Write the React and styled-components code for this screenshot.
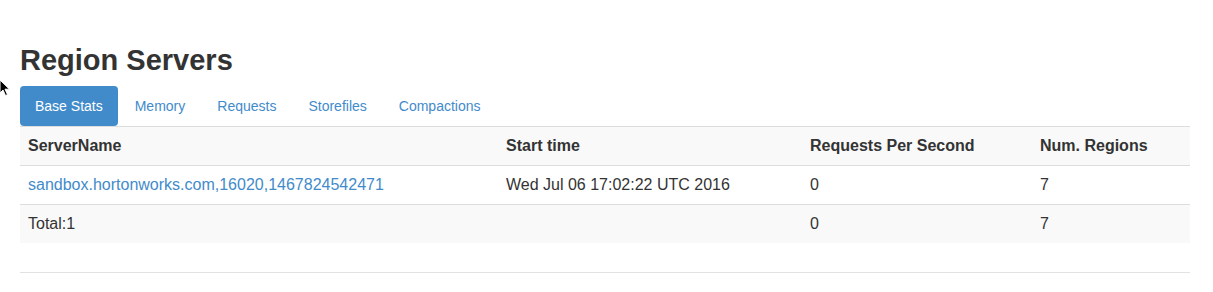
import React from "react";
import styled, { createGlobalStyle } from "styled-components";

const GlobalStyle = createGlobalStyle`
  body {
    margin: 0;
    background: #fff;
    font-family: "Liberation Sans", Arial, sans-serif;
    font-size: 14px;
    color: #333;
  }
`;

const tabs = ["Base Stats", "Memory", "Requests", "Storefiles", "Compactions"];

const columns = [
  { label: "ServerName", width: "478px" },
  { label: "Start time", width: "304px" },
  { label: "Requests Per Second", width: "230px" },
  { label: "Num. Regions", width: "auto" },
];

const rows = [
  {
    name: "sandbox.hortonworks.com,16020,1467824542471",
    link: true,
    start: "Wed Jul 06 17:02:22 UTC 2016",
    rps: "0",
    regions: "7",
  },
  { name: "Total:1", link: false, start: "", rps: "0", regions: "7" },
];

const App = () => {
  return (
    <>
      <GlobalStyle />
      <StyledPage>
        <StyledCursor viewBox="0 0 12 18">
          <path
            d="M1 1 L1 14 L4 11 L6.5 16.5 L8.5 15.6 L6 10.2 L10.5 10.2 Z"
            fill="#000"
            stroke="#fff"
            strokeWidth="1"
          />
        </StyledCursor>
        <StyledTitle>Region Servers</StyledTitle>
        <StyledTabs>
          {tabs.map((t, i) => (
            <StyledTab key={t} active={i === 0}>
              {t}
            </StyledTab>
          ))}
        </StyledTabs>
        <StyledTable>
          <colgroup>
            {columns.map((c) => (
              <col key={c.label} style={{ width: c.width }} />
            ))}
          </colgroup>
          <thead>
            <StyledRow striped>
              {columns.map((c) => (
                <StyledHead key={c.label}>{c.label}</StyledHead>
              ))}
            </StyledRow>
          </thead>
          <tbody>
            {rows.map((r, i) => (
              <StyledRow key={r.name} striped={i % 2 === 1}>
                <StyledCell>
                  {r.link ? <StyledLink href="#">{r.name}</StyledLink> : r.name}
                </StyledCell>
                <StyledCell>{r.start}</StyledCell>
                <StyledCell>{r.rps}</StyledCell>
                <StyledCell>{r.regions}</StyledCell>
              </StyledRow>
            ))}
          </tbody>
        </StyledTable>
        <StyledRule />
      </StyledPage>
    </>
  );
};

const StyledPage = styled.div`
  position: relative;
  width: 1170px;
  padding: 44px 0 0 20px;
`;

const StyledCursor = styled.svg`
  position: absolute;
  left: -1px;
  top: 79px;
  width: 12px;
  height: 18px;
`;

const StyledTitle = styled.h2`
  margin: 0 0 9px;
  font-size: 29px;
  font-weight: bold;
  line-height: 33px;
  color: #333;
`;

const StyledTabs = styled.ul`
  display: flex;
  gap: 2px;
  list-style: none;
  margin: 0;
  padding: 0;
`;

const StyledTab = styled.li`
  padding: 10px 15px;
  border-radius: 4px;
  font-size: 14px;
  line-height: 20px;
  background: ${(p) => (p.active ? "#428bca" : "transparent")};
  color: ${(p) => (p.active ? "#fff" : "#428bca")};
`;

const StyledTable = styled.table`
  width: 100%;
  border-collapse: collapse;
  table-layout: fixed;
  font-size: 16px;
`;

const StyledRow = styled.tr`
  background: ${(p) => (p.striped ? "#f9f9f9" : "#fff")};
`;

const StyledHead = styled.th`
  text-align: left;
  font-weight: bold;
  padding: 8px;
  line-height: 22px;
  border-top: 1px solid #ddd;
  border-bottom: 1px solid #ddd;
`;

const StyledCell = styled.td`
  padding: 8px;
  line-height: 22px;
  border-top: 1px solid #ddd;
`;

const StyledLink = styled.a`
  color: #428bca;
  text-decoration: none;
`;

const StyledRule = styled.hr`
  margin: 29px 0 0;
  border: 0;
  border-top: 1px solid #e2e2e2;
`;

export default App;
